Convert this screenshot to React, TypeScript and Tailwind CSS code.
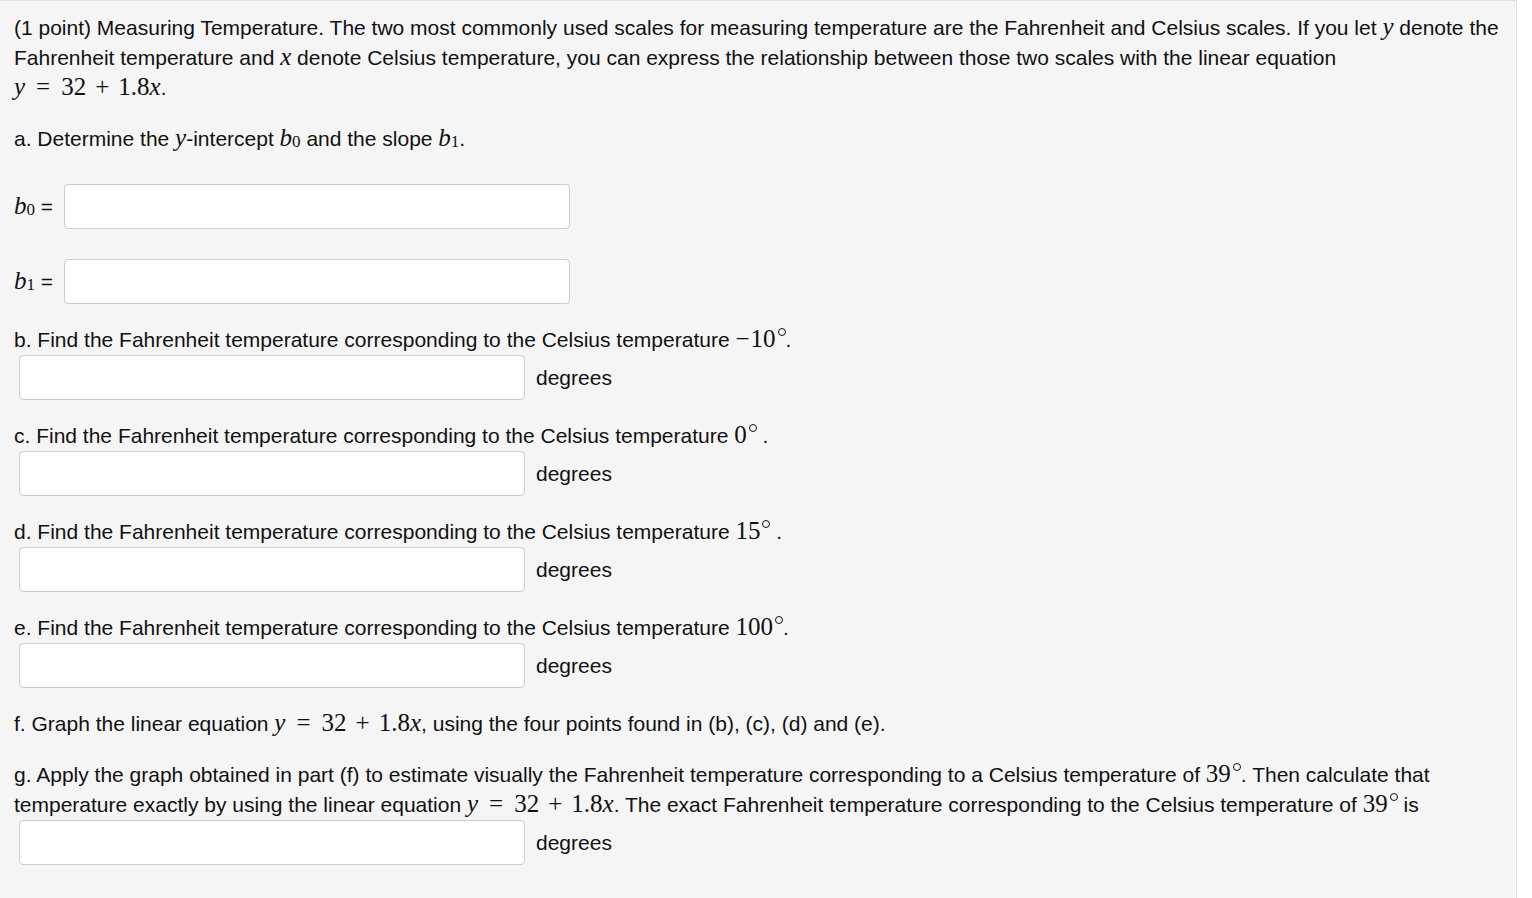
import type { ReactNode } from "react";

// math pieces rendered in a serif face, roughly like MathJax output
function M({ children }: { children: ReactNode }) {
	return (
		<span className="font-['Liberation_Serif','DejaVu_Serif',serif] text-[25px] leading-[20px] whitespace-nowrap">
			{children}
		</span>
	);
}

function V({ children }: { children: ReactNode }) {
	return <i className="italic">{children}</i>;
}

const Eq = () => <span className="mx-[11px]">=</span>;
const Plus = () => <span className="mx-[9px]">+</span>;
const Minus = () => <span className="mr-[1px]">−</span>;

// \circ superscript, drawn as a ring
function Deg() {
	return (
		<span className="inline-block w-[8px] h-[8px] rounded-full border-[1.3px] border-[#111] relative -top-[11px] ml-[2px]" />
	);
}

function Sub({ v, n }: { v: string; n: string }) {
	return (
		<M>
			<V>{v}</V>
			<sub className="text-[17px] relative top-[1px]">{n}</sub>
		</M>
	);
}

const Equation = () => (
	<M>
		<V>y</V>
		<Eq />
		32
		<Plus />
		1.8<V>x</V>
	</M>
);

function AnswerBox() {
	return (
		<input
			type="text"
			className="w-[506px] h-[45px] bg-white border border-[#cccccc] rounded-[4px] outline-none px-3"
		/>
	);
}

function DegreesRow() {
	return (
		<div className="flex items-center gap-[11px] pl-[5px]">
			<AnswerBox />
			<span>degrees</span>
		</div>
	);
}

function Part({ label, temp }: { label: string; temp: ReactNode }) {
	return (
		<>
			<p className="mt-[21px] whitespace-nowrap">
				{label}. Find the Fahrenheit temperature corresponding to the Celsius temperature {temp}
			</p>
			<DegreesRow />
		</>
	);
}

export default function App() {
	return (
		<div className="min-h-screen bg-white">
			<div className="w-[1517px] min-h-[898px] bg-[#f5f5f5] border-t border-r border-[#e3e3e3] px-[14px] pt-[12px] pb-10 font-['Liberation_Sans',Arial,sans-serif] text-[21px] leading-[30px] text-[#111]">
				<div>
					<p className="whitespace-nowrap">
						(1 point) Measuring Temperature. The two most commonly used scales for measuring temperature are the
						Fahrenheit and Celsius scales. If you let <M><V>y</V></M> denote the
					</p>
					<p className="whitespace-nowrap">
						Fahrenheit temperature and <M><V>x</V></M> denote Celsius temperature, you can express the
						relationship between those two scales with the linear equation
					</p>
					<p>
						<Equation />.
					</p>
				</div>

				<p className="mt-[21px]">
					a. Determine the <M><V>y</V></M>-intercept <Sub v="b" n="0" /> and the slope <Sub v="b" n="1" />.
				</p>

				<div className="flex items-center mt-[30px]">
					<span className="w-[50px]">
						<Sub v="b" n="0" /> =
					</span>
					<AnswerBox />
				</div>
				<div className="flex items-center mt-[30px]">
					<span className="w-[50px]">
						<Sub v="b" n="1" /> =
					</span>
					<AnswerBox />
				</div>

				<Part
					label="b"
					temp={
						<>
							<M>
								<Minus />
								10
								<Deg />
							</M>
							.
						</>
					}
				/>
				<Part
					label="c"
					temp={
						<>
							<M>
								0<Deg />
							</M>{" "}
							.
						</>
					}
				/>
				<Part
					label="d"
					temp={
						<>
							<M>
								15
								<Deg />
							</M>{" "}
							.
						</>
					}
				/>
				<Part
					label="e"
					temp={
						<>
							<M>
								100
								<Deg />
							</M>
							.
						</>
					}
				/>

				<p className="mt-[21px] whitespace-nowrap">
					f. Graph the linear equation <Equation />, using the four points found in (b), (c), (d) and (e).
				</p>

				<div className="mt-[21px]">
					<p className="whitespace-nowrap">
						g. Apply the graph obtained in part (f) to estimate visually the Fahrenheit temperature corresponding
						to a Celsius temperature of{" "}
						<M>
							39
							<Deg />
						</M>
						. Then calculate that
					</p>
					<p className="whitespace-nowrap">
						temperature exactly by using the linear equation <Equation />. The exact Fahrenheit temperature
						corresponding to the Celsius temperature of{" "}
						<M>
							39
							<Deg />
						</M>{" "}
						is
					</p>
				</div>
				<DegreesRow />
			</div>
		</div>
	);
}
